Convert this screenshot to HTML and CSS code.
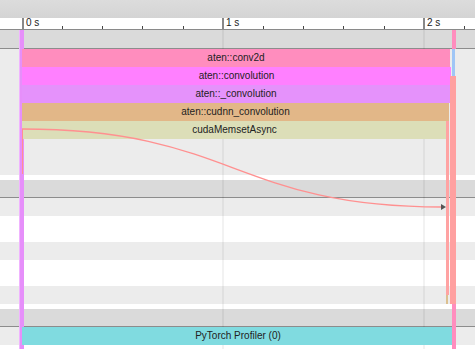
FILE: index.html
```html
<!DOCTYPE html>
<html lang="en">
  <head>
    <meta charset="UTF-8" />
    <meta name="viewport" content="width=device-width, initial-scale=1.0" />
    <title>Trace</title>
    <link rel="stylesheet" href="styles.css">
  </head>
  <body>
    <div class="topbar"></div>
    <div class="ruler">
      <div class="tick major" style="left:22px"><span>0 s</span></div>
      <div class="tick" style="left:62px"></div>
      <div class="tick" style="left:102px"></div>
      <div class="tick" style="left:142px"></div>
      <div class="tick" style="left:183px"></div>
      <div class="tick major" style="left:222px"><span>1 s</span></div>
      <div class="tick" style="left:263px"></div>
      <div class="tick" style="left:303px"></div>
      <div class="tick" style="left:343px"></div>
      <div class="tick" style="left:384px"></div>
      <div class="tick major" style="left:423px"><span>2 s</span></div>
      <div class="tick" style="left:464px"></div>
    </div>

    <div class="timeline">
      <div class="head first"></div>
      <div class="track main">
        <div class="slice conv2d" style="width:428px">aten::conv2d</div>
        <div class="slice conv" style="width:429px">aten::convolution</div>
        <div class="slice conv-inner" style="width:428px">aten::_convolution</div>
        <div class="slice cudnn" style="width:427px">aten::cudnn_convolution</div>
        <div class="slice memset" style="width:425px">cudaMemsetAsync</div>
      </div>
      <div class="gap"></div>
      <div class="head"></div>
      <div class="track">
        <div class="row alt"></div>
        <div class="row tall"></div>
        <div class="row alt"></div>
        <div class="row tall"></div>
        <div class="row alt"></div>
      </div>
      <div class="gap"></div>
      <div class="head"></div>
      <div class="track alt">
        <div class="slice profiler" style="width:432px">PyTorch Profiler (0)</div>
      </div>

      <!-- overlays -->
      <div class="marker"></div>
      <div class="grid" style="left:222px"></div>
      <div class="grid" style="left:423px"></div>
      <div class="sliver pink" style="top:0;height:19px"></div>
      <div class="sliver pink" style="top:274px;height:45px"></div>
      <div class="sliver blue" style="top:19px;height:27px"></div>
      <div class="sliver blue" style="top:265px;height:9px"></div>
      <div class="sliver salmon-wide"></div>
      <div class="sliver salmon-thin"></div>
      <div class="sliver tan"></div>
      <div class="flow-start"></div>
      <svg class="flow" width="475" height="329" viewBox="0 0 475 329">
        <path d="M22,99 C234,99 234,177 442,177" fill="none" stroke="#ff9090" stroke-width="1.3" />
        <polygon points="441,174 446,177 441,180" fill="#555" />
      </svg>
    </div>
  </body>
</html>
```

FILE: styles.css
```css
* {
  margin: 0;
  padding: 0;
  box-sizing: border-box;
}
body {
  width: 475px;
  height: 359px;
  overflow: hidden;
  background: #fff;
  font-family: "Liberation Sans", Arial, sans-serif;
  font-size: 10px;
  color: #222;
}
.topbar {
  height: 18px;
  background: linear-gradient(#dcdcdc, #d4d4d4);
}
.ruler {
  height: 12px;
  position: relative;
  background: #fff;
  border-bottom: 1px solid #8a8a8a;
}
.tick {
  position: absolute;
  bottom: 0;
  width: 1px;
  height: 3px;
  background: #444;
}
.tick.major {
  width: 2px;
  height: 11px;
  background: #888;
}
.tick span {
  position: absolute;
  left: 4px;
  top: -1px;
  line-height: 11px;
  white-space: nowrap;
  color: #222;
}
.timeline {
  position: relative;
}
.head {
  height: 18px;
  background: #dadada;
  border-bottom: 1px solid #8c8c8c;
}
.head.first {
  height: 19px;
}
.track {
  background: #fff;
}
.track.main {
  height: 126px;
  background: #ececec;
}
.track.alt,
.row.alt {
  background: #ececec;
}
.row {
  height: 18px;
}
.row.tall {
  height: 26px;
  background: #fff;
}
.gap {
  height: 5px;
}
.slice {
  position: relative;
  z-index: 2;
  height: 18px;
  margin-left: 22px;
  line-height: 18px;
  text-align: center;
  white-space: nowrap;
  overflow: hidden;
}
.conv2d {
  background: #ff8dbe;
}
.conv {
  background: #ff80ff;
}
.conv-inner {
  background: #e592fb;
}
.cudnn {
  background: #e2b788;
}
.memset {
  background: #dcdeb8;
}
.profiler {
  background: #80dbe0;
}
.marker {
  position: absolute;
  left: 19px;
  top: 0;
  width: 5px;
  height: 319px;
  background: #e68ffa;
  border-left: 1px solid #f0b4ff;
  z-index: 1;
}
.grid {
  position: absolute;
  top: 0;
  width: 2px;
  height: 319px;
  background: rgba(0, 0, 0, 0.05);
  z-index: 1;
}
.sliver {
  position: absolute;
  z-index: 3;
}
.sliver.pink {
  left: 452px;
  width: 4px;
  background: #ff8dbe;
}
.sliver.blue {
  left: 452px;
  width: 3px;
  background: #9fc6f6;
}
.salmon-wide {
  left: 450px;
  top: 46px;
  width: 6px;
  height: 228px;
  background: #ffa0a0;
}
.salmon-thin {
  left: 446px;
  top: 91px;
  width: 3px;
  height: 174px;
  background: #ffa3a3;
}
.tan {
  left: 446px;
  top: 265px;
  width: 2px;
  height: 9px;
  background: #dcc090;
}
.flow-start {
  position: absolute;
  left: 22px;
  top: 99px;
  width: 1px;
  height: 45px;
  background: #ff9090;
  z-index: 3;
}
.flow {
  position: absolute;
  left: 0;
  top: 0;
  z-index: 4;
  pointer-events: none;
}
```
